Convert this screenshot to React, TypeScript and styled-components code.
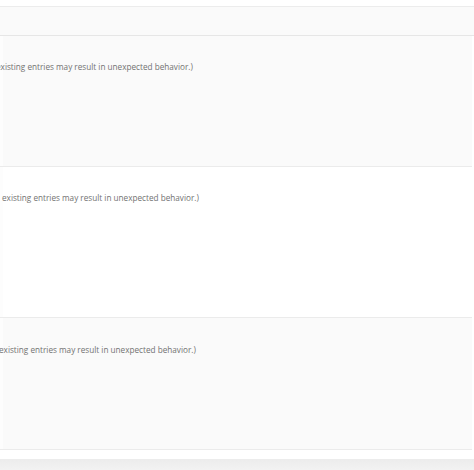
import React from "react";
import styled, { createGlobalStyle } from "styled-components";

const Global = createGlobalStyle`
  html, body { margin: 0; padding: 0; background: #ffffff; }
  body { font-family: "Open Sans", "Liberation Sans", sans-serif; overflow: hidden; }
`;

const Page = styled.div`
  width: 474px;
  height: 470px;
  overflow: hidden;
  padding-top: 6px;
  box-sizing: border-box;
  display: flex;
  flex-direction: column;
`;

const HeaderBar = styled.div`
  height: 28px;
  flex: none;
  background: #fafafa;
  border-top: 1px solid #ececec;
  border-bottom: 1px solid #e6e6e6;
`;

const Panel = styled.section<{ $shade: boolean; $h: number; $pad: number }>`
  flex: none;
  height: ${(p) => p.$h}px;
  box-sizing: border-box;
  margin: 0 2px 0 0;
  padding-top: ${(p) => p.$pad}px;
  background: ${(p) => (p.$shade ? "#fafafa" : "#ffffff")};
  border-bottom: 1px solid #ebebeb;
  box-shadow: inset 3px 0 0 #fdfdfd;
`;

const Note = styled.p<{ $shift: number }>`
  margin: 0 0 0 ${(p) => p.$shift}px;
  font-size: 8.2px;
  line-height: 11px;
  color: #727272;
  white-space: nowrap;
`;

const Gap = styled.div`
  height: 9px;
  flex: none;
  background: #ffffff;
`;

const Footer = styled.div`
  flex: 1;
  background: linear-gradient(#ececec, #f2f2f2);
`;

const panels = [
  { shade: true, h: 131, pad: 25, shift: -4 },
  { shade: false, h: 151, pad: 25, shift: 2 },
  { shade: true, h: 132, pad: 26, shift: -1 },
];

export default function App() {
  return (
    <>
      <Global />
      <Page>
        <HeaderBar />
        {panels.map((p, i) => (
          <Panel key={i} $shade={p.shade} $h={p.h} $pad={p.pad}>
            <Note $shift={p.shift}>existing entries may result in unexpected behavior.)</Note>
          </Panel>
        ))}
        <Gap />
        <Footer />
      </Page>
    </>
  );
}
